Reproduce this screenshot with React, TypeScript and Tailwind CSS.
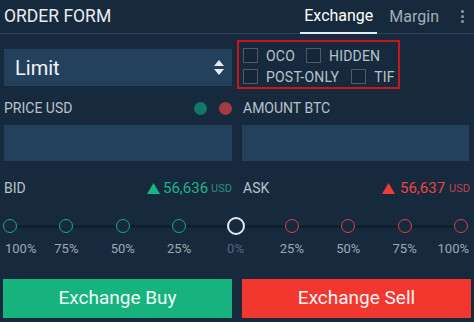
import React from 'react';

const buySteps = ['100%', '75%', '50%', '25%'];
const sellSteps = ['25%', '50%', '75%', '100%'];

const Check: React.FC<{ label: string; className?: string }> = ({ label, className = '' }) => (
  <div className={`flex items-center gap-[8px] ${className}`}>
    <div className="w-[15px] h-[15px] border-[1.5px] border-[#4b5b6b] bg-[#14263a]" />
    <span className="text-[14px] leading-none text-[#b9c2cb] tracking-[0.2px]">{label}</span>
  </div>
);

const Tri: React.FC<{ color: string }> = ({ color }) => (
  <svg width="13" height="11" viewBox="0 0 13 11">
    <polygon points="6.5,0 13,11 0,11" fill={color} />
  </svg>
);

export default function App() {
  return (
    <div className="w-[474px] h-[322px] bg-[#172a3d] overflow-hidden font-['Roboto',sans-serif] select-none">
      {/* Header */}
      <div className="h-[34px] border-b border-[#2a4259] flex items-center justify-between pl-1 pr-[10px]">
        <span className="text-[17.5px] text-[#e9edf1]">ORDER FORM</span>
        <div className="flex items-center h-full">
          <div className="h-full flex items-center px-1 border-b-2 border-[#e6eaee] mt-[1px]">
            <span className="text-[16px] text-white">Exchange</span>
          </div>
          <span className="ml-[12px] text-[16px] text-[#a3adb8]">Margin</span>
          <div className="ml-[22px] flex flex-col gap-[2px]">
            <div className="w-[3px] h-[3px] rounded-full bg-[#8e99a5]" />
            <div className="w-[3px] h-[3px] rounded-full bg-[#8e99a5]" />
            <div className="w-[3px] h-[3px] rounded-full bg-[#8e99a5]" />
          </div>
        </div>
      </div>

      {/* Form body */}
      <div className="grid grid-cols-2 gap-x-[10px] px-1">
        {/* Order type + flags */}
        <div className="mt-[15px] h-[37px] bg-[#23415c] flex items-center justify-between pl-[11px] pr-[8px]">
          <span className="text-[20px] text-[#f2f5f7]">Limit</span>
          <svg width="10" height="15" viewBox="0 0 10 15">
            <polygon points="5,0 10,6 0,6" fill="#e8ecef" />
            <polygon points="0,9 10,9 5,15" fill="#e8ecef" />
          </svg>
        </div>
        <div className="mt-[6px] ml-[-5px] w-[163px] h-[49px] border-2 border-[#c8161d] pl-[4px] pt-[6px] flex flex-col gap-[6px]">
          <div className="flex items-center">
            <Check label="OCO" className="mr-[11px]" />
            <Check label="HIDDEN" />
          </div>
          <div className="flex items-center">
            <Check label="POST-ONLY" className="mr-[12px]" />
            <Check label="TIF" />
          </div>
        </div>

        {/* Labels */}
        <div className="mt-[9px] h-[20px] flex items-center justify-between">
          <span className="text-[14px] text-[#b9c2cb]">PRICE USD</span>
          <div className="flex items-center gap-[12px]">
            <div className="w-[13px] h-[13px] rounded-full bg-[#0f7869]" />
            <div className="w-[13px] h-[13px] rounded-full bg-[#a43a42]" />
          </div>
        </div>
        <div className="mt-[9px] h-[20px] flex items-center pl-[1px]">
          <span className="text-[14px] text-[#b9c2cb]">AMOUNT BTC</span>
        </div>

        {/* Inputs */}
        <div className="mt-[7px] h-[36px] bg-[#23415c]" />
        <div className="mt-[7px] h-[36px] bg-[#23415c] mr-[1px]" />

        {/* Bid / Ask */}
        <div className="mt-[17px] h-[20px] flex items-center justify-between">
          <span className="text-[14px] text-[#b9c2cb]">BID</span>
          <div className="flex items-center">
            <Tri color="#18b487" />
            <span className="ml-[3px] text-[15px] text-[#1bb38a]">56,636</span>
            <span className="ml-[3px] text-[11px] text-[#2a8f7c] mt-[2px]">USD</span>
          </div>
        </div>
        <div className="mt-[17px] h-[20px] flex items-center justify-between pl-[1px]">
          <span className="text-[14px] text-[#b9c2cb]">ASK</span>
          <div className="flex items-center">
            <Tri color="#ee3b3a" />
            <span className="ml-[5px] text-[15px] text-[#ea4443]">56,637</span>
            <span className="ml-[4px] text-[11px] text-[#c0434b] mt-[2px]">USD</span>
          </div>
        </div>
      </div>

      {/* Slider */}
      <div className="relative mt-[18px] h-[20px] ml-[1px] mr-1 flex items-center justify-between">
        <div className="absolute left-[3px] right-[2px] top-[9px] h-[3px] bg-[#0f1f2f]" />
        {buySteps.map((s) => (
          <div key={'b' + s} className="relative w-[18px] flex justify-center">
            <div className="w-[14px] h-[14px] rounded-full border-[1.5px] border-[#1aa886] bg-[#172a3d]" />
          </div>
        ))}
        <div className="relative w-[18px] flex justify-center">
          <div className="w-[18px] h-[18px] rounded-full border-2 border-[#e4e8ec] bg-[#172a3d]" />
        </div>
        {sellSteps.map((s) => (
          <div key={'s' + s} className="relative w-[18px] flex justify-center">
            <div className="w-[14px] h-[14px] rounded-full border-[1.5px] border-[#df3f4e] bg-[#172a3d]" />
          </div>
        ))}
      </div>
      <div className="mt-[5px] h-[16px] ml-[1px] mr-1 flex items-center justify-between text-[13px] text-[#9ea8b3] whitespace-nowrap">
        {buySteps.map((s, i) => (
          <div key={'lb' + s} className={`w-[18px] flex ${i === 0 ? 'justify-start pl-[4px]' : 'justify-center'}`}>
            {s}
          </div>
        ))}
        <div className="w-[18px] flex justify-center text-[#56677a]">0%</div>
        {sellSteps.map((s, i) => (
          <div key={'ls' + s} className={`w-[18px] flex ${i === 3 ? 'justify-end pr-[1px]' : 'justify-center'}`}>
            {s}
          </div>
        ))}
      </div>

      {/* Actions */}
      <div className="mt-[22px] grid grid-cols-2 gap-x-[10px] pl-[3px] pr-[3px]">
        <button className="h-[39px] bg-[#16b37f] text-[19px] text-[#f1fbf7]">Exchange Buy</button>
        <button className="h-[39px] bg-[#f2372f] text-[19px] text-[#fff3f2]">Exchange Sell</button>
      </div>
    </div>
  );
}
